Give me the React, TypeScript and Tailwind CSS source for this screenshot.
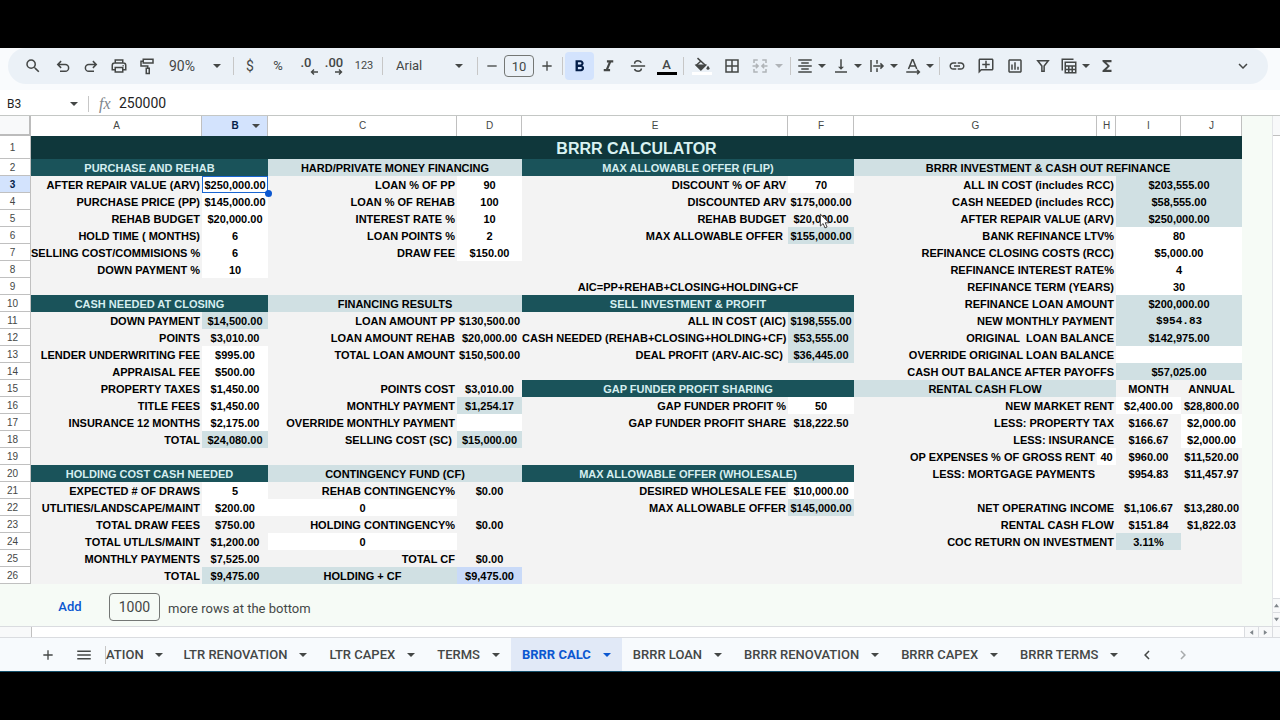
import React from "react";
import {
  MdAdd,
  MdBorderAll,
  MdFormatAlignCenter,
  MdFormatBold,
  MdFormatItalic,
  MdFunctions,
  MdInsertLink,
  MdKeyboardArrowDown,
  MdKeyboardArrowLeft,
  MdKeyboardArrowRight,
  MdMenu,
  MdOutlineAddComment,
  MdOutlineInsertChart,
  MdRemove,
  MdSearch,
  MdVerticalAlignBottom,
} from "react-icons/md";

type Kind = "label" | "plain" | "input" | "result" | "dark" | "light" | "total" | "mono" | "title" | "selected";
type Cell = [Kind, string, number?];

const KIND: Record<Kind, string> = {
  label: "pr-0.5 text-right text-black",
  plain: "text-center text-black",
  input: "bg-white text-center text-black",
  result: "bg-[#d0e0e3] text-center text-black",
  dark: "bg-[#1a535a] text-center text-[#d5eef0]",
  light: "bg-[#d0e0e3] text-center text-black",
  total: "bg-[#c9daf8] text-center text-black",
  mono: "bg-[#d0e0e3] text-center font-['Liberation_Mono',monospace] text-black",
  title: "bg-[#0f373b] text-center text-[16px] text-[#d9f2f2]",
  selected: "relative bg-white text-center text-black",
};

const COLUMNS = [
  ["A", "w-[171px]"],
  ["B", "w-[66px]"],
  ["C", "w-[189px]"],
  ["D", "w-[65px]"],
  ["E", "w-[266px]"],
  ["F", "w-[66px]"],
  ["G", "w-[243px]"],
  ["H", "w-[19px]"],
  ["I", "w-[65px]"],
  ["J", "w-[61px]"],
];

const gap = (span: number): Cell => ["plain", "", span];

const ROWS: Cell[][] = [
  [["title", "BRRR CALCULATOR", 10]],
  [["dark", "PURCHASE AND REHAB", 2], ["light", "HARD/PRIVATE MONEY FINANCING", 2], ["dark", "MAX ALLOWABLE OFFER (FLIP)", 2], ["light", "BRRR INVESTMENT & CASH OUT REFINANCE", 4]],
  [["label", "AFTER REPAIR VALUE (ARV)"], ["selected", "$250,000.00"], ["label", "LOAN % OF PP"], ["input", "90"], ["label", "DISCOUNT % OF ARV"], ["input", "70"], ["label", "ALL IN COST (includes RCC)", 2], ["result", "$203,555.00", 2]],
  [["label", "PURCHASE PRICE (PP)"], ["input", "$145,000.00"], ["label", "LOAN % OF REHAB"], ["input", "100"], ["label", "DISCOUNTED ARV"], ["plain", "$175,000.00"], ["label", "CASH NEEDED (includes RCC)", 2], ["result", "$58,555.00", 2]],
  [["label", "REHAB BUDGET"], ["input", "$20,000.00"], ["label", "INTEREST RATE %"], ["input", "10"], ["label", "REHAB BUDGET"], ["plain", "$20,000.00"], ["label", "AFTER REPAIR VALUE (ARV)", 2], ["result", "$250,000.00", 2]],
  [["label", "HOLD TIME ( MONTHS)"], ["input", "6"], ["label", "LOAN POINTS %"], ["input", "2"], ["label", "MAX ALLOWABLE OFFER "], ["result", "$155,000.00"], ["label", "BANK REFINANCE LTV%", 2], ["input", "80", 2]],
  [["label", "SELLING COST/COMMISIONS %"], ["input", "6"], ["label", "DRAW FEE"], ["input", "$150.00"], gap(2), ["label", "REFINANCE CLOSING COSTS (RCC)", 2], ["input", "$5,000.00", 2]],
  [["label", "DOWN PAYMENT %"], ["input", "10"], gap(4), ["label", "REFINANCE INTEREST RATE%", 2], ["input", "4", 2]],
  [gap(4), ["plain", "AIC=PP+REHAB+CLOSING+HOLDING+CF", 2], ["label", "REFINANCE TERM (YEARS)", 2], ["input", "30", 2]],
  [["dark", "CASH NEEDED AT CLOSING", 2], ["light", "FINANCING RESULTS", 2], ["dark", "SELL INVESTMENT & PROFIT", 2], ["label", "REFINANCE LOAN AMOUNT", 2], ["result", "$200,000.00", 2]],
  [["label", "DOWN PAYMENT"], ["result", "$14,500.00"], ["label", "LOAN AMOUNT PP"], ["plain", "$130,500.00"], ["label", "ALL IN COST (AIC)"], ["result", "$198,555.00"], ["label", "NEW MONTHLY PAYMENT", 2], ["mono", "$954.83", 2]],
  [["label", "POINTS"], ["plain", "$3,010.00"], ["label", "LOAN AMOUNT REHAB"], ["plain", "$20,000.00"], ["label", "CASH NEEDED (REHAB+CLOSING+HOLDING+CF)"], ["result", "$53,555.00"], ["label", "ORIGINAL  LOAN BALANCE", 2], ["result", "$142,975.00", 2]],
  [["label", "LENDER UNDERWRITING FEE"], ["input", "$995.00"], ["label", "TOTAL LOAN AMOUNT"], ["plain", "$150,500.00"], ["label", "DEAL PROFIT (ARV-AIC-SC) "], ["result", "$36,445.00"], ["label", "OVERRIDE ORIGINAL LOAN BALANCE", 2], ["input", "", 2]],
  [["label", "APPRAISAL FEE"], ["input", "$500.00"], gap(4), ["label", "CASH OUT BALANCE AFTER PAYOFFS", 2], ["result", "$57,025.00", 2]],
  [["label", "PROPERTY TAXES"], ["input", "$1,450.00"], ["label", "POINTS COST"], ["plain", "$3,010.00"], ["dark", "GAP FUNDER PROFIT SHARING", 2], ["light", "RENTAL CASH FLOW", 2], ["plain", "MONTH"], ["plain", "ANNUAL"]],
  [["label", "TITLE FEES"], ["input", "$1,450.00"], ["label", "MONTHLY PAYMENT"], ["result", "$1,254.17"], ["label", "GAP FUNDER PROFIT %"], ["input", "50"], ["label", "NEW MARKET RENT", 2], ["input", "$2,400.00"], ["plain", "$28,800.00"]],
  [["label", "INSURANCE 12 MONTHS"], ["input", "$2,175.00"], ["label", "OVERRIDE MONTHLY PAYMENT"], ["input", ""], ["label", "GAP FUNDER PROFIT SHARE"], ["plain", "$18,222.50"], ["label", "LESS: PROPERTY TAX", 2], ["plain", "$166.67"], ["input", "$2,000.00"]],
  [["label", "TOTAL"], ["result", "$24,080.00"], ["label", "SELLING COST (SC) "], ["result", "$15,000.00"], gap(2), ["label", "LESS: INSURANCE", 2], ["plain", "$166.67"], ["input", "$2,000.00"]],
  [gap(6), ["label", "OP EXPENSES % OF GROSS RENT"], ["input", "40"], ["plain", "$960.00"], ["plain", "$11,520.00"]],
  [["dark", "HOLDING COST CASH NEEDED", 2], ["light", "CONTINGENCY FUND (CF)", 2], ["dark", "MAX ALLOWABLE OFFER (WHOLESALE)", 2], ["label", "LESS: MORTGAGE PAYMENTS"], ["plain", ""], ["plain", "$954.83"], ["plain", "$11,457.97"]],
  [["label", "EXPECTED # OF DRAWS"], ["input", "5"], ["label", "REHAB CONTINGENCY%"], ["plain", "$0.00"], ["label", "DESIRED WHOLESALE FEE"], ["input", "$10,000.00"], gap(4)],
  [["label", "UTLITIES/LANDSCAPE/MAINT"], ["input", "$200.00"], ["input", "0"], ["plain", ""], ["label", "MAX ALLOWABLE OFFER"], ["result", "$145,000.00"], ["label", "NET OPERATING INCOME", 2], ["plain", "$1,106.67"], ["plain", "$13,280.00"]],
  [["label", "TOTAL DRAW FEES"], ["plain", "$750.00"], ["label", "HOLDING CONTINGENCY%"], ["plain", "$0.00"], gap(2), ["label", "RENTAL CASH FLOW", 2], ["plain", "$151.84"], ["plain", "$1,822.03"]],
  [["label", "TOTAL UTL/LS/MAINT"], ["plain", "$1,200.00"], ["input", "0"], ["plain", ""], gap(2), ["label", "COC RETURN ON INVESTMENT", 2], ["result", "3.11%"], ["plain", ""]],
  [["label", "MONTHLY PAYMENTS"], ["plain", "$7,525.00"], ["label", "TOTAL CF"], ["plain", "$0.00"], gap(6)],
  [["label", "TOTAL"], ["result", "$9,475.00"], ["result", "HOLDING + CF"], ["total", "$9,475.00"], gap(6)],
];

const SHEETS = ["LTR RENOVATION", "LTR CAPEX", "TERMS", "BRRR CALC", "BRRR LOAN", "BRRR RENOVATION", "BRRR CAPEX", "BRRR TERMS"];

function Caret({ className = "text-[#444746]" }: { className?: string }) {
  return (
    <svg viewBox="0 0 8 4" className={`h-1 w-2 shrink-0 ${className}`} aria-hidden="true">
      <path d="M0 0h8L4 4z" fill="currentColor" />
    </svg>
  );
}

function Divider() {
  return <span className="mx-0.5 h-[18px] w-px shrink-0 bg-[#c7c7c7]" />;
}

function Tool({ label, width = "w-7", children }: { label: string; width?: string; children: React.ReactNode }) {
  return (
    <button type="button" aria-label={label} className={`flex h-7 shrink-0 items-center justify-center self-center ${width}`}>
      {children}
    </button>
  );
}

function Glyph({ children }: { children: React.ReactNode }) {
  return (
    <svg viewBox="0 0 24 24" className="size-[18px]" fill="none" stroke="currentColor" strokeWidth="2" aria-hidden="true">
      {children}
    </svg>
  );
}

function MenuTool({ label, children }: { label: string; children: React.ReactNode }) {
  return (
    <button type="button" aria-label={label} className="flex h-7 w-9 shrink-0 items-center justify-center gap-1">
      {children}
      <Caret />
    </button>
  );
}

function Toolbar() {
  return (
    <div className="mr-3 ml-2 flex h-9 items-center rounded-full bg-[#ebf1f7] px-[11px] text-[#444746]">
      <Tool label="Search the menus"><MdSearch className="size-[18px]" /></Tool>
      <span className="w-0.5" />
      <Tool label="Undo"><Glyph><path d="M8 19h7a4.500 4.500 0 0 0 0-9H5M9.500 5.500 5 10l4.500 4.500" /></Glyph></Tool>
      <Tool label="Redo"><Glyph><path d="M16 19H9a4.500 4.500 0 0 1 0-9h10M14.500 5.500 19 10l-4.500 4.500" /></Glyph></Tool>
      <Tool label="Print">
        <Glyph>
          <path d="M7 8V4h10v4M7 17H3v-6a3 3 0 0 1 3-3h12a3 3 0 0 1 3 3v6h-4M7 14h10v6H7z" />
          <circle cx="17.500" cy="11.500" r="1" fill="currentColor" stroke="none" />
        </Glyph>
      </Tool>
      <Tool label="Paint format">
        <Glyph><path d="M7 3h13v5H7zM7 5.500H4V12h9v3M11 15h4v7h-4z" /></Glyph>
      </Tool>
      <div className="relative flex w-[70px] shrink-0 items-center">
        <select aria-label="Zoom" className="w-full appearance-none bg-transparent pl-2 text-[14px] leading-5">
          <option>90%</option>
        </select>
        <span className="pointer-events-none absolute right-2.5 flex"><Caret /></span>
      </div>
      <Divider />
      <Tool label="Format as currency"><span className="text-[14px]">$</span></Tool>
      <Tool label="Format as percent"><span className="text-[13px]">%</span></Tool>
      <Tool label="Decrease decimal places">
        <span className="flex flex-col items-end">
          <span className="text-[13px] leading-3 font-medium">.0</span>
          <svg viewBox="0 0 8 6" className="-mr-1.5 h-1.5 w-2" fill="none" stroke="currentColor" strokeWidth="1.400" aria-hidden="true"><path d="M8 3H1.500M4 .5 1.500 3 4 5.500" /></svg>
        </span>
      </Tool>
      <Tool label="Increase decimal places">
        <span className="flex flex-col items-end">
          <span className="text-[13px] leading-3 font-medium">.00</span>
          <svg viewBox="0 0 8 6" className="h-1.5 w-2" fill="none" stroke="currentColor" strokeWidth="1.400" aria-hidden="true"><path d="M0 3h6.500M4 .5 6.500 3 4 5.500" /></svg>
        </span>
      </Tool>
      <Tool label="More formats" width="w-8"><span className="text-[11px] leading-4">123</span></Tool>
      <Divider />
      <div className="relative flex w-[90px] shrink-0 items-center">
        <select aria-label="Font" className="w-full appearance-none bg-transparent pl-[11px] text-[13px] leading-5">
          <option>Arial</option>
        </select>
        <span className="pointer-events-none absolute right-3 flex"><Caret /></span>
      </div>
      <Divider />
      <Tool label="Decrease font size" width="w-6"><MdRemove className="size-4" /></Tool>
      <input aria-label="Font size" defaultValue="10" className="h-[22px] w-[30px] shrink-0 rounded-[4px] border border-[#747775] bg-transparent text-center text-[13px]" />
      <Tool label="Increase font size" width="w-[26px]"><MdAdd className="size-4" /></Tool>
      <Divider />
      <span className="flex w-[29px] shrink-0 justify-center rounded-[4px] bg-[#d3e3fd] text-[#041e49]">
        <Tool label="Bold"><MdFormatBold className="size-[19px]" /></Tool>
      </span>
      <Tool label="Italic" width="w-[29px]"><MdFormatItalic className="size-[19px]" /></Tool>
      <Tool label="Strikethrough" width="w-[29px]">
        <Glyph><path d="M2.500 12h19M7.500 9c0-2.500 2-4 4.500-4 2.200 0 3.800 1 4.400 2.800M7.400 16c.6 2 2.300 3 4.700 3 2.600 0 4.400-1.200 4.400-3.600" /></Glyph>
      </Tool>
      <Tool label="Text color" width="w-[29px]">
        <span className="flex flex-col items-center">
          <span className="text-[13px] leading-[14px] font-medium">A</span>
          <span className="h-[3px] w-5 bg-black" />
        </span>
      </Tool>
      <Divider />
      <Tool label="Fill color" width="w-8">
        <span className="flex flex-col items-center">
          <svg viewBox="0 0 24 20" className="h-[15px] w-[18px]" fill="none" stroke="currentColor" strokeWidth="2" aria-hidden="true">
            <path d="M6 1.500 16.500 11 10.500 17 4.500 11 11 5" />
            <path d="M4.500 11h12l-6 6z" fill="currentColor" />
            <path d="M20 11.500s-2 2.200-2 3.500a2 2 0 0 0 4 0c0-1.300-2-3.500-2-3.500z" fill="currentColor" stroke="none" />
          </svg>
          <span className="h-[3px] w-5 bg-white" />
        </span>
      </Tool>
      <Tool label="Borders"><MdBorderAll className="size-[18px]" /></Tool>
      <button type="button" aria-label="Merge cells" disabled className="flex h-7 w-[42px] shrink-0 items-center justify-center gap-1.5 text-[#b0b4b8]">
        <Glyph><path d="M9 4H4v4M4 16v4h5M15 4h5v4M20 16v4h-5M2 12h7M6.500 9 9.500 12l-3 3M22 12h-7M17.500 9l-3 3 3 3" /></Glyph>
        <Caret className="text-[#b0b4b8]" />
      </button>
      <Divider />
      <MenuTool label="Horizontal align"><MdFormatAlignCenter className="size-[18px]" /></MenuTool>
      <MenuTool label="Vertical align"><MdVerticalAlignBottom className="size-[18px]" /></MenuTool>
      <MenuTool label="Text wrapping"><Glyph><path d="M4 4v16M12 4v5M12 15v5M7 12h13M16.500 8.500 20 12l-3.500 3.500" /></Glyph></MenuTool>
      <MenuTool label="Text rotation"><Glyph><path d="M6 16 11 3.500h1L17 16M8 12h7M3 20h17M17.500 17l3 3-3 3" /></Glyph></MenuTool>
      <Divider />
      <Tool label="Insert link" width="w-[29px]"><MdInsertLink className="size-[18px]" /></Tool>
      <Tool label="Insert comment" width="w-[29px]"><MdOutlineAddComment className="size-[18px] -scale-x-100" /></Tool>
      <Tool label="Insert chart" width="w-[29px]"><MdOutlineInsertChart className="size-[18px]" /></Tool>
      <Tool label="Create a filter"><Glyph><path d="M5 5h14l-5.500 7v7h-3v-7z" /></Glyph></Tool>
      <MenuTool label="Table views">
        <Glyph><path d="M3 18V3h15M7 7h14v14H7zM7 12h14M7 16.500h14M11.700 12v9M16.300 12v9" /></Glyph>
      </MenuTool>
      <Tool label="Functions"><MdFunctions className="size-[18px]" /></Tool>
      <span className="grow" />
      <Tool label="Hide the menus"><MdKeyboardArrowDown className="size-[18px]" /></Tool>
    </div>
  );
}

function FormulaBar() {
  return (
    <div className="flex h-[26px] items-center border-b border-[#c4c7c5] bg-white pt-0.5">
      <input aria-label="Name box" defaultValue="B3" className="w-[70px] shrink-0 pl-[7px] text-[12px] text-[#1f1f1f]" />
      <button type="button" aria-label="Named ranges"><Caret /></button>
      <span className="ml-2.5 h-4 w-px bg-[#c7c7c7]" />
      <span className="w-[30px] pl-2.5 font-['Liberation_Serif',serif] text-[16px] leading-5 text-[#80868b] italic">fx</span>
      <input aria-label="Formula" defaultValue="250000" className="min-w-0 grow text-[14px] text-[#1f1f1f]" />
    </div>
  );
}

function Sheet() {
  return (
    <table className="w-[1242px] shrink-0 table-fixed border-collapse bg-[#f3f3f3] font-['Liberation_Sans',Arial,sans-serif] text-[11px]">
      <colgroup>
        <col className="w-[31px]" />
        {COLUMNS.map(([name, width]) => <col key={name} className={width} />)}
      </colgroup>
      <thead>
        <tr className="h-5">
          <td className="bg-[#f8f9fa] p-0 shadow-[inset_-2px_-2px_0_#bcbcbc]" />
          {COLUMNS.map(([name]) => (
            <th
              key={name}
              scope="col"
              className={
                name === "B"
                  ? "relative bg-[#d3e3fd] p-0 text-[10px] leading-5 font-bold text-[#041e49] shadow-[inset_-1px_0_0_#c0c0c0]"
                  : "bg-white p-0 text-[10px] leading-5 font-normal text-[#444746] shadow-[inset_-1px_0_0_#c0c0c0]"
              }
            >
              {name}
              {name === "B" && <span className="absolute top-2 right-2 flex"><Caret /></span>}
            </th>
          ))}
        </tr>
      </thead>
      <tbody>
        {ROWS.map((cells, r) => (
          <tr key={r} className={r === 0 ? "h-[23px] leading-[21px]" : "h-[17px] leading-[15px]"}>
            <th
              scope="row"
              className={
                r === 2
                  ? "bg-[#d3e3fd] p-0 pr-1.5 text-[10px] font-bold text-[#041e49] shadow-[inset_-1px_-1px_0_#c0c0c0]"
                  : "bg-white p-0 pr-1.5 text-[10px] font-normal text-[#444746] shadow-[inset_-1px_-1px_0_#c0c0c0]"
              }
            >
              {r + 1}
            </th>
            {cells.map(([kind, text, span], c) => (
              <td key={c} colSpan={span} className={`p-0 pt-0.5 font-bold whitespace-pre ${KIND[kind]}`}>
                {text}
                {kind === "selected" && (
                  <>
                    <span className="absolute inset-0 border border-[#1a66d2]" />
                    <span className="absolute -right-1 -bottom-1 z-10 size-[7px] rounded-full bg-[#0b57d0]" />
                  </>
                )}
              </td>
            ))}
          </tr>
        ))}
      </tbody>
    </table>
  );
}

function Pointer() {
  return (
    <svg viewBox="0 0 12 18" className="absolute top-[97px] left-[819px] h-[17px] w-[11px]" aria-hidden="true">
      <path d="M1.500 1v13l3-2.800 2 4.800 2.300-1-2-4.600H11z" fill="#fff" stroke="#333" strokeWidth="1" />
    </svg>
  );
}

function ScrollArrow({ label, d, className }: { label: string; d: string; className: string }) {
  return (
    <button type="button" aria-label={label} className={`flex shrink-0 items-center justify-center border-[#dadce0] bg-[#f8f9fa] ${className}`}>
      <svg viewBox="0 0 6 6" className="size-[5px]" aria-hidden="true"><path d={d} fill="#80868b" /></svg>
    </button>
  );
}

function SheetTabs() {
  return (
    <nav aria-label="Sheets" className="flex h-[34px] items-stretch border-b border-[#14506b] bg-[#f7fafd] pl-[34px] text-[13px] font-medium text-[#444746]">
      <Tool label="Add sheet"><MdAdd className="size-4" /></Tool>
      <span className="w-2" />
      <Tool label="All sheets"><MdMenu className="size-[18px]" /></Tool>
      <span className="ml-[7px] h-[18px] w-px self-center bg-[#c7c7c7]" />
      <button type="button" className="flex items-center gap-[11px] pr-2.5 whitespace-nowrap">ATION<Caret /></button>
      {SHEETS.map((name) => (
        <button
          key={name}
          type="button"
          className={
            name === "BRRR CALC"
              ? "flex items-center gap-3 bg-[#e1e9f7] px-[11px] font-bold whitespace-nowrap text-[#0b57d0]"
              : "flex items-center gap-3 px-[11px] whitespace-nowrap"
          }
        >
          {name}
          <Caret className={name === "BRRR CALC" ? "text-[#0b57d0]" : "text-[#444746]"} />
        </button>
      ))}
      <button type="button" aria-label="Scroll tabs left" className="flex w-9 items-center justify-center"><MdKeyboardArrowLeft className="size-[18px]" /></button>
      <button type="button" aria-label="Scroll tabs right" className="flex w-9 items-center justify-center text-[#a8abad]"><MdKeyboardArrowRight className="size-[18px]" /></button>
    </nav>
  );
}

export default function App() {
  return (
    <div className="min-h-screen overflow-x-hidden bg-black pt-12 font-[Roboto,'Liberation_Sans',sans-serif]">
      <div className="bg-[#f9fbfd]">
        <div className="pb-1.5"><Toolbar /></div>
        <FormulaBar />
        <div className="flex bg-[#f6fbf6]">
          <main className="relative min-w-0 grow">
            <Sheet />
            <Pointer />
            <form className="flex h-[42px] items-center pt-1 pl-[50px] text-[#444746]">
              <button type="button" className="mr-2 h-8 w-10 text-[13px] font-medium text-[#0b57d0]">Add</button>
              <input id="row-count" defaultValue="1000" className="ml-[11px] h-7 w-[51px] rounded-[4px] border border-[#747775] bg-transparent text-center text-[14px]" />
              <label htmlFor="row-count" className="pt-1 pl-2 text-[13px]">more rows at the bottom</label>
            </form>
          </main>
          <div className="flex w-2 shrink-0 flex-col border-l border-[#e3e5e8] bg-white">
            <span className="h-5 border-b border-[#c0c0c0] bg-[#f8f9fa]" />
            <span className="grow" />
            <ScrollArrow label="Scroll up" d="M0 5h6L3 1z" className="h-[14px] border-t" />
            <ScrollArrow label="Scroll down" d="M0 1h6L3 5z" className="h-[14px] border-t" />
          </div>
        </div>
        <div className="flex h-3 border-y border-[#dadce0] bg-white">
          <span className="w-8 border-r border-[#c0c0c0] bg-[#f8f9fa]" />
          <span className="grow" />
          <ScrollArrow label="Scroll left" d="M5 0v6L1 3z" className="w-[14px] border-l" />
          <ScrollArrow label="Scroll right" d="M1 0v6l4-3z" className="w-[14px] border-l" />
          <span className="w-2 border-l border-[#dadce0] bg-[#f8f9fa]" />
        </div>
        <SheetTabs />
      </div>
    </div>
  );
}
